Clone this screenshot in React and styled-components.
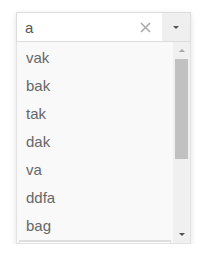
import React, { useState } from "react"
import styled, { createGlobalStyle } from "styled-components"

const GlobalStyle = createGlobalStyle`
  html, body {
    margin: 0;
    padding: 0;
    background: #fff;
  }
  body {
    font-family: "Liberation Sans", Arial, sans-serif;
  }
`

const Page = styled.div`
  padding: 12px 0 0 16px;
`

const Combo = styled.div`
  width: 175px;
  box-shadow: 0 2px 6px rgba(0, 0, 0, 0.12);
`

const Field = styled.div`
  display: flex;
  height: 30px;
  border: 1px solid #dcdcdc;
  box-sizing: border-box;
  background: #fff;
`

const Input = styled.input`
  flex: 1;
  min-width: 0;
  border: 0;
  outline: none;
  padding: 0 0 0 8px;
  font: 15px "Liberation Sans", Arial, sans-serif;
  color: #555;
  background: transparent;
`

const Clear = styled.span`
  width: 33px;
  display: flex;
  align-items: center;
  justify-content: center;
`

const Toggle = styled.span`
  width: 28px;
  background: #efefef;
  display: flex;
  align-items: center;
  justify-content: center;
`

const Arrow = styled.span`
  width: 0;
  height: 0;
  border-left: ${p => p.$size}px solid transparent;
  border-right: ${p => p.$size}px solid transparent;
  ${p => (p.$up ? "border-bottom" : "border-top")}: ${p => p.$size}px solid ${p => p.$color};
`

const List = styled.div`
  display: flex;
  height: 202px;
  background: #f9f9f9;
  border: 1px solid #e2e2e2;
  border-top: 0;
  box-sizing: border-box;
`

const Items = styled.ul`
  flex: 1;
  margin: 0;
  padding: 2px 0 0;
  list-style: none;
  overflow: hidden;
`

const Item = styled.li`
  height: 28px;
  line-height: 28px;
  padding-left: 9px;
  font-size: 15px;
  color: #666;
`

const Next = styled.li`
  height: 4px;
  margin: 0 2px;
  border-top: 2px solid #dedede;
  border-left: 1px solid #dedede;
  border-right: 1px solid #dedede;
  background: #fff;
`

const Scrollbar = styled.div`
  width: 17px;
  background: #f0f0f0;
  display: flex;
  flex-direction: column;
  align-items: center;
`

const ScrollBtn = styled.div`
  height: 17px;
  display: flex;
  align-items: center;
  justify-content: center;
`

const Track = styled.div`
  flex: 1;
  width: 100%;
  display: flex;
  flex-direction: column;
  align-items: center;
`

const Thumb = styled.div`
  width: 13px;
  height: 100px;
  background: #c1c1c1;
`

const options = ["vak", "bak", "tak", "dak", "va", "ddfa", "bag"]

export default function App() {
  const [value, setValue] = useState("a")
  return (
    <>
      <GlobalStyle />
      <Page>
        <Combo>
          <Field>
            <Input value={value} onChange={e => setValue(e.target.value)} />
            <Clear>
              <svg width="11" height="11" viewBox="0 0 11 11">
                <path d="M1 1L10 10M10 1L1 10" stroke="#aaa" strokeWidth="1.6" />
              </svg>
            </Clear>
            <Toggle>
              <Arrow $size={3.5} $color="#555" />
            </Toggle>
          </Field>
          <List>
            <Items>
              {options.map(o => (
                <Item key={o}>{o}</Item>
              ))}
              <Next />
            </Items>
            <Scrollbar>
              <ScrollBtn>
                <Arrow $up $size={3.5} $color="#a3a3a3" />
              </ScrollBtn>
              <Track>
                <Thumb />
              </Track>
              <ScrollBtn>
                <Arrow $size={3.5} $color="#505050" />
              </ScrollBtn>
            </Scrollbar>
          </List>
        </Combo>
      </Page>
    </>
  )
}
